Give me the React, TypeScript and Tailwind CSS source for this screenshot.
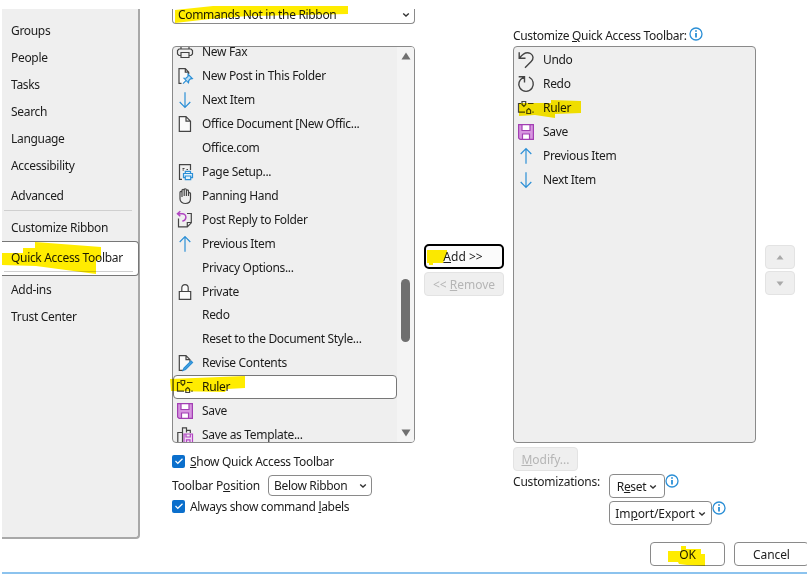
import type { ReactNode } from "react";

type IconName =
  | "printer"
  | "pinDoc"
  | "down"
  | "up"
  | "doc"
  | "pageSetup"
  | "hand"
  | "reply"
  | "lock"
  | "revise"
  | "ruler"
  | "save"
  | "template"
  | "undo"
  | "redo";

interface Command {
  label: string;
  icon?: IconName;
  selected?: boolean;
}

const commands: Command[] = [
  { label: "New Fax", icon: "printer" },
  { label: "New Post in This Folder", icon: "pinDoc" },
  { label: "Next Item", icon: "down" },
  { label: "Office Document [New Offic...", icon: "doc" },
  { label: "Office.com" },
  { label: "Page Setup...", icon: "pageSetup" },
  { label: "Panning Hand", icon: "hand" },
  { label: "Post Reply to Folder", icon: "reply" },
  { label: "Previous Item", icon: "up" },
  { label: "Privacy Options..." },
  { label: "Private", icon: "lock" },
  { label: "Redo" },
  { label: "Reset to the Document Style..." },
  { label: "Revise Contents", icon: "revise" },
  { label: "Ruler", icon: "ruler", selected: true },
  { label: "Save", icon: "save" },
  { label: "Save as Template...", icon: "template" },
];

const toolbar: Command[] = [
  { label: "Undo", icon: "undo" },
  { label: "Redo", icon: "redo" },
  { label: "Ruler", icon: "ruler" },
  { label: "Save", icon: "save" },
  { label: "Previous Item", icon: "up" },
  { label: "Next Item", icon: "down" },
];

const icons: Record<IconName, ReactNode> = {
  printer: (
    <>
      <path d="M4 5V2.500h8V5M4 11.500H2L.5 10V6.500L2 5h12l1.500 1.500V10L14 11.500h-2" />
      <path d="M4 8.500h8V13.500H4z" />
    </>
  ),
  pinDoc: (
    <>
      <path fill="#fafafa" stroke="none" d="M2 1h6.500l3.500 3.500v5L6 15H2z" />
      <path d="M4.500 15.300H2V.7h6.300l3.400 3.500V6M8.300.7v3.500h3.400" />
      <path
        stroke="#2b8fd6"
        fill="#b9def5"
        d="m11 6.200 4.300 4.300-1.800.3-1.700 1.700-.3 2.300-4.500-4.500 2.300-.3L11 8.300zM9 12.700l-3 3"
      />
    </>
  ),
  down: <path stroke="#2b8fd6" d="M8 .3v15M2.700 10l5.300 5.300 5.300-5.300" />,
  up: <path stroke="#2b8fd6" d="M8 15.700V.7M2.700 6 8 .7 13.300 6" />,
  doc: <path fill="#fafafa" d="M2.300.7h6.700l4.500 4.500v10.100H2.300zM9 .7v4.500h4.500" />,
  pageSetup: (
    <>
      <path d="M5 15.300H2.500V.7h11V6" />
      <path d="M5.500 4.500h2M5.500 6h1.500M9.500 5.500h1.500" strokeWidth="1" />
      <path
        stroke="#2b8fd6"
        fill="#e4f2fb"
        d="M8.300 9.500V7.300h5.200v2.200M8.300 13.700H6.500V9.500h9v4.200h-1.800M8.300 12h5.400v3.700H8.300z"
      />
    </>
  ),
  hand: (
    <path d="M3 9V4.500c0-1.500 2-1.500 2 0V7.500 2.500c0-1.500 2.200-1.500 2.200 0V7 1.800c0-1.400 2.200-1.400 2.200 0V7 3c0-1.400 2.100-1.400 2.100 0v5V5.500c0-1.300 2-1.300 2 0V10.500c0 3-2 5-5 5S3 13.500 3 11zM5 7.500V9M7.200 7v1M9.400 7v1" />
  ),
  reply: (
    <>
      <path d="M1.500 6.500v8.300h8.800l4-4V1.500H10M14.300 10.500h-4v4.300" />
      <path stroke="#b146c2" strokeWidth="1.500" d="M3.300-.8.500 1.700l2.800 2.500M.8 1.700h4.500a3.600 3.600 0 0 1 0 7.200" />
    </>
  ),
  lock: <path fill="#fafafa" d="M2.300 7.500h11.400v7.800H2.300zM4.800 7.500V3.800a3.200 3.200 0 0 1 6.400 0v3.700" />,
  revise: (
    <>
      <path fill="#fafafa" d="M6 15.300H2.300V.7H9l4 4V7M9 .7v4h4" />
      <path stroke="#2b8fd6" fill="#4da6e2" d="m14 6 1.500 1.500-7 7-2.500 1 1-2.500z" />
    </>
  ),
  ruler: (
    <path d="M3 3.500H.5v8.700H7M10 3.500h5.500M14.300 12.200h1.400M4 1.500h3.700v3l-1.800 1.800L4 4.500zM8.800 13.500V10.300l1.900-1.800 1.900 1.800v3.200z" />
  ),
  save: (
    <g stroke="#a23fb3">
      <path fill="#d795e0" d="M.6.6h14.800v14.800H2.100L.6 14z" />
      <path fill="#fff" d="M4 .6h8v5.900H4zM4.500 15.400V10h7v5.400z" />
    </g>
  ),
  template: (
    <>
      <path d="M5.500 15.500H.8V5.500h4.700zM5.500 15.500V.8h4v4.700M9.500 3.300h3.800V6" />
      <path stroke="#b146c2" fill="#f3dcf6" d="M7 7h8.500v8.800H7zM9 7v3h4.300V7M9.500 15.500v-2.700h3.500v2.700" />
    </>
  ),
  undo: (
    <path
      strokeWidth="1.400"
      d="M1.200.2v6h6.300M1.500 6C4.500 2 8.800-.5 12.500 1.500c3.300 2 3.200 5.500.7 8L7 15.700"
    />
  ),
  redo: (
    <path
      strokeWidth="1.400"
      d="M.7.800h5.800v5.700M5.900 1.200C1 3.700-.7 8.300 2 12.200c2.800 4.200 9.300 4.200 12 0C16.500 8.300 15.300 3.500 11 1"
    />
  ),
};

function Icon({ name }: { name: IconName }) {
  return (
    <svg
      viewBox="0 0 16 16"
      className="size-4 overflow-visible"
      fill="none"
      stroke="#444"
      strokeWidth="1.200"
    >
      {icons[name]}
    </svg>
  );
}

function Info({ className = "" }: { className?: string }) {
  return (
    <svg viewBox="0 0 14 14" className={`size-[14px] shrink-0 ${className}`} fill="none" stroke="#2b8fd6">
      <circle cx="7" cy="7" r="6" strokeWidth="1.300" />
      <path d="M7 3.200v1.600M7 6v4.500" strokeWidth="1.800" />
    </svg>
  );
}

function Chevron() {
  return (
    <svg viewBox="0 0 8 6" className="h-[6px] w-2 shrink-0" fill="none" stroke="#333" strokeWidth="1.400">
      <path d="m1.200 1.500 2.800 2.500 2.800-2.500" />
    </svg>
  );
}

function Check() {
  return (
    <span className="flex size-[13px] shrink-0 items-center justify-center rounded-[2px] bg-[#0b6fcc]">
      <svg viewBox="0 0 10 10" className="size-[10px]" fill="none" stroke="#fff" strokeWidth="1.200">
        <path d="m1.500 5 2.300 2.300L8.500 2.800" />
      </svg>
    </span>
  );
}

function CommandRow({ label, icon, selected }: Command) {
  return (
    <div
      className={`flex h-[23.950px] shrink-0 items-center rounded-[4px] border pl-[3px] ${
        selected ? "border-[#777] bg-white" : "border-transparent"
      }`}
    >
      <span className="w-[25px]">{icon && <Icon name={icon} />}</span>
      {label}
    </div>
  );
}

function NavItem({ children }: { children: string }) {
  return <div className="flex h-[27px] items-center pl-[9px]">{children}</div>;
}

export default function App() {
  return (
    <div className="relative h-[583px] w-[807px] overflow-hidden bg-white pt-[9px] pl-[2px] font-['Noto_Sans','Open_Sans',sans-serif] text-[12px] leading-4 tracking-[-0.32px] whitespace-nowrap text-[#1c1c1c]">
      <div className="flex h-[530px]">
        <nav className="w-[138px] shrink-0 rounded-br-[4px] border-r-2 border-b-2 border-[#a8a8a8] bg-[#efefef] pt-[8px]">
          <NavItem>Groups</NavItem>
          <NavItem>People</NavItem>
          <NavItem>Tasks</NavItem>
          <NavItem>Search</NavItem>
          <NavItem>Language</NavItem>
          <NavItem>Accessibility</NavItem>
          <div className="pt-[3px]">
            <NavItem>Advanced</NavItem>
          </div>
          <div className="mt-px mr-[6px] ml-[2px] border-t border-[#cfcfcf]" />
          <div className="pt-[3px]">
            <NavItem>Customize Ribbon</NavItem>
          </div>
          <div className="mr-[-1px] flex h-[35px] flex-col rounded-r-[4px] border border-l-0 border-[#777] bg-white pt-[2px]">
            <NavItem>Quick Access Toolbar</NavItem>
            <div className="mr-[5px] ml-[2px] border-t border-[#cfcfcf]" />
          </div>
          <NavItem>Add-ins</NavItem>
          <NavItem>Trust Center</NavItem>
        </nav>

        <section className="ml-8 w-[243px] shrink-0">
          <div className="flex h-[15px] items-center justify-between rounded-b-[4px] border border-t-0 border-[#8a8a8a] pr-1 pb-[3px] pl-[5px]">
            <span>Commands Not in the Ribbon</span>
            <Chevron />
          </div>
          <div className="mt-[22px] flex h-[397px] overflow-hidden rounded-[4px] border border-[#8a8a8a] bg-[#efefef]">
            <div className="-mt-[6.800px] w-[224px] shrink-0">
              {commands.map((c) => (
                <CommandRow key={c.label} {...c} />
              ))}
            </div>
            <div className="flex flex-1 flex-col items-center bg-[#f4f4f4] pt-[5px] pb-[5px]">
              <svg viewBox="0 0 10 8" className="h-2 w-[10px]" fill="#707070">
                <path d="M5 .5 9.500 7.500H.5z" />
              </svg>
              <div className="mt-[219px] h-[63px] w-[9px] rounded-full bg-[#6f6f6f]" />
              <svg viewBox="0 0 10 8" className="mt-auto h-2 w-[10px]" fill="#707070">
                <path d="M5 7.500 9.500.5H.5z" />
              </svg>
            </div>
          </div>
          <div className="mt-[10px] flex h-4 items-center gap-[5px]">
            <Check />
            <span className="pt-[2px]">
              <u>S</u>how Quick Access Toolbar
            </span>
          </div>
          <div className="mt-[6px] flex h-[21px] items-center">
            <span className="w-24 tracking-[-0.2px]">
              Toolbar P<u>o</u>sition
            </span>
            <div className="flex h-[21px] w-[104px] items-center justify-between rounded-[4px] border border-[#8a8a8a] pr-1 pl-[5px]">
              <span>Below Ribbon</span>
              <Chevron />
            </div>
          </div>
          <div className="mt-[2px] flex h-4 items-center gap-[5px]">
            <Check />
            <span className="pt-[2px]">
              Always show command <u>l</u>abels
            </span>
          </div>
        </section>

        <section className="ml-[9px] flex w-20 shrink-0 flex-col gap-[3px] pt-[235px] tracking-normal">
          <button className="h-[25px] rounded-[5px] border-2 border-black bg-[#fbfbfb] pr-[2px]">
            <u>A</u>dd &gt;&gt;
          </button>
          <button className="h-6 rounded-[4px] border border-[#e3e3e3] bg-[#efefef] pt-px text-[#b5b5b5]">
            &lt;&lt; <u>R</u>emove
          </button>
        </section>

        <section className="ml-[9px] w-[243px] shrink-0 pt-[18px]">
          <div className="flex h-[19px]">
            <span className="pt-[1px] pr-[2px]">
              Customize <u>Q</u>uick Access Toolbar:
            </span>
            <Info />
          </div>
          <div className="h-[397px] rounded-[4px] border border-[#8a8a8a] bg-[#efefef] pt-[1px]">
            {toolbar.map((c) => (
              <CommandRow key={c.label} {...c} />
            ))}
          </div>
          <button className="mt-1 block h-6 w-[65px] rounded-[4px] border border-[#e3e3e3] bg-[#efefef] pt-px tracking-normal text-[#b5b5b5]">
            <u>M</u>odify...
          </button>
          <div className="mt-[3px] flex">
            <span className="w-24 tracking-[-0.2px]">Customizations:</span>
            <div className="flex flex-col gap-[3px]">
              <div className="flex">
                <button className="flex h-6 w-[56px] items-center justify-center gap-[3px] rounded-[4px] border border-[#8a8a8a] pt-px">
                  <span>
                    R<u>e</u>set
                  </span>
                  <Chevron />
                </button>
                <Info />
              </div>
              <div className="flex">
                <button className="flex h-6 w-[103px] items-center justify-center gap-[3px] rounded-[4px] border border-[#8a8a8a] pt-px tracking-[-0.1px]">
                  <span>
                    Im<u>p</u>ort/Export
                  </span>
                  <Chevron />
                </button>
                <Info />
              </div>
            </div>
          </div>
        </section>

        <section className="ml-[9px] flex w-[30px] shrink-0 flex-col gap-[2px] pt-[236px]">
          <button className="flex h-6 items-center justify-center rounded-[4px] border border-[#e3e3e3] bg-[#efefef]">
            <svg viewBox="0 0 8 5" className="h-[5px] w-2" fill="#a9a9a9">
              <path d="M4 0 7.500 4.500H.5z" />
            </svg>
          </button>
          <button className="flex h-6 items-center justify-center rounded-[4px] border border-[#e3e3e3] bg-[#efefef]">
            <svg viewBox="0 0 8 5" className="h-[5px] w-2" fill="#a9a9a9">
              <path d="M4 5 7.500.5H.5z" />
            </svg>
          </button>
        </section>
      </div>

      <footer className="flex gap-[9px] border-b-2 border-[#8cc3ee] pt-[3px] pb-[6px] pl-[648px] tracking-[-0.1px]">
        <button className="h-6 w-[75px] shrink-0 rounded-[4px] border border-[#8a8a8a] pt-px">OK</button>
        <button className="h-6 w-[75px] shrink-0 rounded-[4px] border border-[#8a8a8a] pt-px">Cancel</button>
      </footer>

      {/* highlighter strokes */}
      <svg
        viewBox="0 0 807 583"
        className="pointer-events-none absolute inset-0 h-[583px] w-[807px] mix-blend-multiply"
        fill="#ffec00"
      >
        <path d="M175 10 213 6h135v8l-100 2-38 3-35 4z" />
        <path d="m35 242 66 5v12l-5 2v13l-60-8-34-1V253h21v-5h12z" />
        <path d="m170 379 75-3v12l-18 1-2 3-54-1z" />
        <path d="M519 103h32v-3l30 1v12l-26 1v4l-20-3-16 1z" />
        <path d="M427 250h20v3l-4 10h-10v2h-4v-2h-2z" />
        <path d="M668 551h13v-5h5v3h15v5h4v12l-18-1-8-1-1-2h-10z" />
      </svg>
    </div>
  );
}
